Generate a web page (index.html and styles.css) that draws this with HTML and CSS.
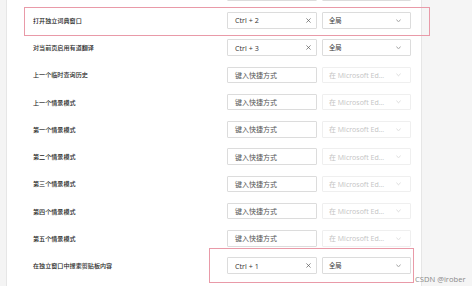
FILE: index.html
```html
<!DOCTYPE html>
<html lang="zh-CN">
<head>
<meta charset="utf-8">
<link rel="stylesheet" href="styles.css">
</head>
<body>
<div class="page">
  <div class="gutter"></div>
  <main class="panel">
    <div class="list">
      <div class="row">
        <span class="label"></span>
        <div class="field"></div>
        <div class="select"></div>
      </div>
      <div class="row">
        <span class="label">打开独立词典窗口</span>
        <div class="field"><span class="value">Ctrl + 2</span><svg class="clear" viewBox="0 0 6 6"><path d="M0.5 0.5 L5.5 5.5 M5.5 0.5 L0.5 5.5"/></svg></div>
        <div class="select"><span>全局</span><svg class="chev" viewBox="0 0 6 4"><path d="M0.5 0.8 L3 3.2 L5.5 0.8"/></svg></div>
      </div>
      <div class="row">
        <span class="label">对当前页启用有道翻译</span>
        <div class="field"><span class="value">Ctrl + 3</span><svg class="clear" viewBox="0 0 6 6"><path d="M0.5 0.5 L5.5 5.5 M5.5 0.5 L0.5 5.5"/></svg></div>
        <div class="select"><span>全局</span><svg class="chev" viewBox="0 0 6 4"><path d="M0.5 0.8 L3 3.2 L5.5 0.8"/></svg></div>
      </div>
      <div class="row">
        <span class="label">上一个临时查询历史</span>
        <div class="field"><span class="ph">键入快捷方式</span></div>
        <div class="select off"><span>在 Microsoft Ed...</span><svg class="chev" viewBox="0 0 6 4"><path d="M0.5 0.8 L3 3.2 L5.5 0.8"/></svg></div>
      </div>
      <div class="row">
        <span class="label">上一个情景模式</span>
        <div class="field"><span class="ph">键入快捷方式</span></div>
        <div class="select off"><span>在 Microsoft Ed...</span><svg class="chev" viewBox="0 0 6 4"><path d="M0.5 0.8 L3 3.2 L5.5 0.8"/></svg></div>
      </div>
      <div class="row">
        <span class="label">第一个情景模式</span>
        <div class="field"><span class="ph">键入快捷方式</span></div>
        <div class="select off"><span>在 Microsoft Ed...</span><svg class="chev" viewBox="0 0 6 4"><path d="M0.5 0.8 L3 3.2 L5.5 0.8"/></svg></div>
      </div>
      <div class="row">
        <span class="label">第二个情景模式</span>
        <div class="field"><span class="ph">键入快捷方式</span></div>
        <div class="select off"><span>在 Microsoft Ed...</span><svg class="chev" viewBox="0 0 6 4"><path d="M0.5 0.8 L3 3.2 L5.5 0.8"/></svg></div>
      </div>
      <div class="row">
        <span class="label">第三个情景模式</span>
        <div class="field"><span class="ph">键入快捷方式</span></div>
        <div class="select off"><span>在 Microsoft Ed...</span><svg class="chev" viewBox="0 0 6 4"><path d="M0.5 0.8 L3 3.2 L5.5 0.8"/></svg></div>
      </div>
      <div class="row">
        <span class="label">第四个情景模式</span>
        <div class="field"><span class="ph">键入快捷方式</span></div>
        <div class="select off"><span>在 Microsoft Ed...</span><svg class="chev" viewBox="0 0 6 4"><path d="M0.5 0.8 L3 3.2 L5.5 0.8"/></svg></div>
      </div>
      <div class="row">
        <span class="label">第五个情景模式</span>
        <div class="field"><span class="ph">键入快捷方式</span></div>
        <div class="select off"><span>在 Microsoft Ed...</span><svg class="chev" viewBox="0 0 6 4"><path d="M0.5 0.8 L3 3.2 L5.5 0.8"/></svg></div>
      </div>
      <div class="row">
        <span class="label">在独立窗口中搜索剪贴板内容</span>
        <div class="field"><span class="value">Ctrl + 1</span><svg class="clear" viewBox="0 0 6 6"><path d="M0.5 0.5 L5.5 5.5 M5.5 0.5 L0.5 5.5"/></svg></div>
        <div class="select"><span>全局</span><svg class="chev" viewBox="0 0 6 4"><path d="M0.5 0.8 L3 3.2 L5.5 0.8"/></svg></div>
      </div>
    </div>
  </main>
  <div class="side"></div>
  <div class="edge"></div>
</div>
<div class="mark mark-top"></div>
<div class="mark mark-bottom"></div>
<div class="watermark">CSDN @irober</div>
</body>
</html>
```

FILE: styles.css
```css
* { box-sizing: border-box; }
html, body {
  margin: 0;
  padding: 0;
  width: 474px;
  height: 286px;
  overflow: hidden;
  background: #f5f5f5;
  font-family: "Open Sans", "Noto Sans CJK SC", sans-serif;
}
.page {
  display: flex;
  height: 286px;
}
.gutter {
  width: 6px;
  flex: none;
  background: #f4f4f4;
}
.panel {
  width: 416px;
  flex: none;
  background: #fff;
  border-left: 1px solid #e6e6e6;
  border-right: 1px solid #e6e6e6;
  overflow: hidden;
}
.side {
  flex: 1;
  background: #f5f5f5;
}
.edge {
  width: 2px;
  flex: none;
  background: #fff;
}
.list {
  margin-top: -20.4px;
  padding-left: 26px;
}
.row {
  display: flex;
  align-items: center;
  height: 27.25px;
}
.label {
  width: 194px;
  flex: none;
  font-family: "Noto Sans CJK SC", sans-serif;
  font-size: 6.1px;
  color: #262626;
  font-weight: 500;
}
.field {
  width: 90px;
  height: 16.5px;
  flex: none;
  display: flex;
  align-items: center;
  justify-content: space-between;
  border: 1px solid #dcdcdc;
  border-radius: 1px;
  padding: 0 5px 0 7px;
  font-size: 7px;
}
.value {
  color: #333;
  font-family: "Open Sans", sans-serif;
  font-size: 7.2px;
}
.ph {
  color: #555;
  font-family: "Noto Sans CJK SC", sans-serif;
  font-size: 7px;
}
.clear {
  width: 5px;
  height: 5px;
  fill: none;
  stroke: #555;
  stroke-width: 0.8;
}
.select {
  width: 89px;
  height: 16.5px;
  flex: none;
  margin-left: 5px;
  display: flex;
  align-items: center;
  justify-content: space-between;
  border: 1px solid #dcdcdc;
  border-radius: 1px;
  padding: 0 9px 0 6px;
  font-family: "Noto Sans CJK SC", sans-serif;
  font-size: 6.3px;
  color: #333;
}
.select.off {
  border-color: #efefef;
  color: #c4c4c4;
  font-family: "Open Sans", "Noto Sans CJK SC", sans-serif;
  font-size: 7px;
}
.chev {
  width: 5px;
  height: 3.5px;
  fill: none;
  stroke: #666;
  stroke-width: 0.8;
}
.select.off .chev { stroke: #c8c8c8; }
.mark {
  position: absolute;
  border: 1px solid #e99aa8;
}
.mark-top {
  left: 24px;
  top: 7px;
  width: 406px;
  height: 29px;
}
.mark-bottom {
  left: 209px;
  top: 248px;
  width: 205px;
  height: 35px;
}
.watermark {
  position: absolute;
  left: 415px;
  top: 274px;
  font-family: "Open Sans", sans-serif;
  font-size: 7.6px;
  color: #8a8a8a;
}
```
